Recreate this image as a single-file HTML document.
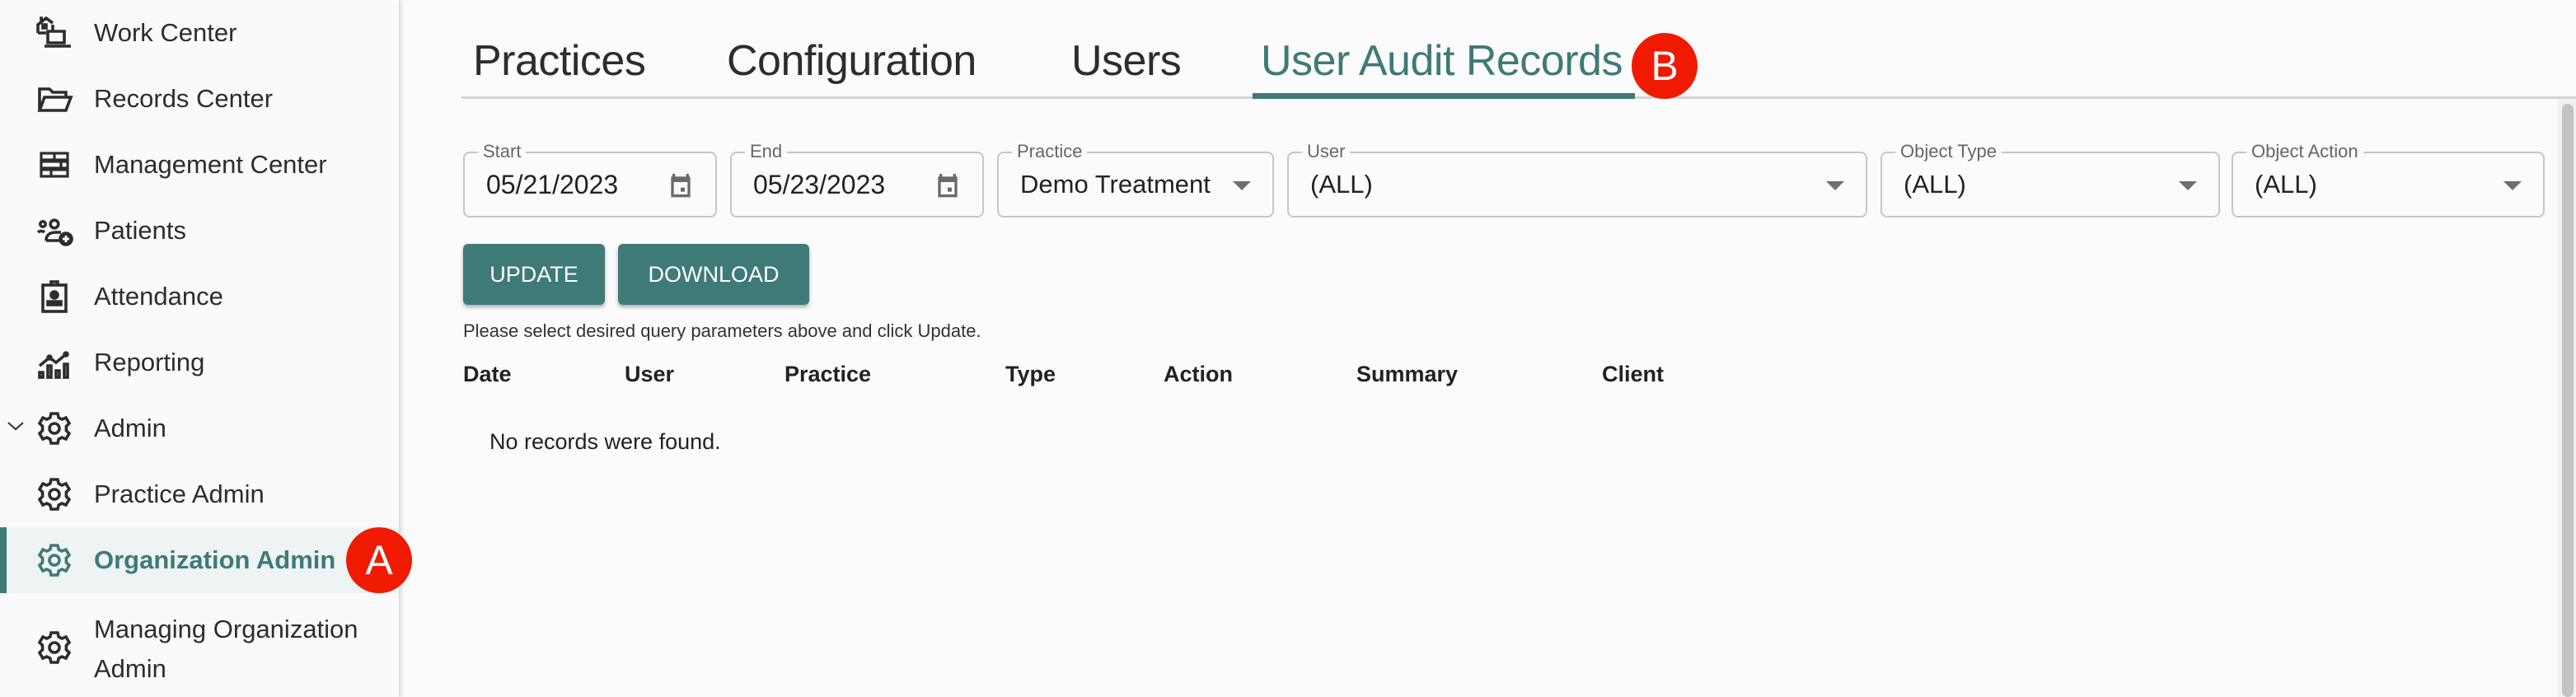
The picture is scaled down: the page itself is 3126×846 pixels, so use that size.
<!DOCTYPE html>
<html><head><meta charset="utf-8"><style>
*{box-sizing:border-box;margin:0;padding:0}
body{width:3126px;height:846px;overflow:hidden;background:#fbfbfb;font-family:"Liberation Sans",sans-serif;color:#2b2b2b;position:relative}
.abs{position:absolute}
#side{left:0;top:0;width:484px;height:846px;background:#fafafa;box-shadow:2px 0 6px rgba(0,0,0,.18)}
.it{position:absolute;left:114px;font-size:31px;line-height:40px;color:#2d2d2d;white-space:nowrap}
.ic{position:absolute;left:42px;width:48px;height:48px}
.tab{position:absolute;top:44px;font-size:52px;line-height:60px;color:#2d2d2d;letter-spacing:-0.5px}
.fld{position:absolute;top:184px;height:80px;border:2px solid #c6c6c6;border-radius:8px}
.lbl{position:absolute;top:-16px;left:16px;background:#fbfbfb;padding:0 6px;font-size:22px;line-height:28px;color:#666}
.val{position:absolute;left:26px;top:18px;font-size:31px;line-height:40px;color:#222}
.arr{position:absolute;right:26px;top:34px;width:0;height:0;border-left:11px solid transparent;border-right:11px solid transparent;border-top:11px solid #6f6f6f}
.cal{position:absolute;right:22px;top:20px}
.btn{position:absolute;top:296px;height:74px;background:#3e7a78;border-radius:6px;color:#fff;font-size:27px;line-height:74px;text-align:center;box-shadow:0 3px 5px rgba(0,0,0,.3)}
.th{position:absolute;top:436px;font-size:27px;font-weight:bold;line-height:36px;color:#222}
.badge{position:absolute;width:80px;height:80px;border-radius:50%;background:#f01a00;color:#fff;font-size:50px;line-height:80px;text-align:center}
</style></head><body>
<div id="side" class="abs">
<svg class="ic" style="top:16px" viewBox="0 0 24 24" fill="none" stroke="#2d2d2d" stroke-width="1.8"><path d="M2 12V7l5-4 4 3M2 12h5M4 6V3h1"/><rect x="5" y="7" width="2" height="2" fill="#2d2d2d"/><path d="M11 7v4M8 11h10v7H8zM6 20h16"/></svg>
<div class="it" style="top:20px">Work Center</div>
<svg class="ic" style="top:96px" viewBox="0 0 24 24" fill="none" stroke="#2d2d2d" stroke-width="1.8"><path d="M3 19V6h6l2 2h8v3M3 19l3-8h16l-3 8z"/></svg>
<div class="it" style="top:100px">Records Center</div>
<svg class="ic" style="top:176px" viewBox="0 0 24 24" fill="none" stroke="#2d2d2d" stroke-width="1.6"><rect x="4" y="5" width="16" height="4"/><rect x="4" y="10" width="16" height="4"/><rect x="4" y="15" width="16" height="4"/><path d="M12 5v4M16 10v4M10 15v4"/></svg>
<div class="it" style="top:180px">Management Center</div>
<svg class="ic" style="top:256px" viewBox="0 0 24 24" fill="none" stroke="#2d2d2d" stroke-width="1.8"><circle cx="5" cy="8" r="1.6"/><circle cx="12" cy="8" r="2.4"/><path d="M2 13c1-1 3-1 4 0M7 18c0-4 3-5 6-5h3M7 18h8"/><circle cx="19" cy="17" r="3.5" fill="#2d2d2d"/><path d="M19 15v4M17 17h4" stroke="#fff" stroke-width="1.4"/></svg>
<div class="it" style="top:260px">Patients</div>
<svg class="ic" style="top:336px" viewBox="0 0 24 24" fill="none" stroke="#2d2d2d" stroke-width="1.8"><rect x="5" y="5" width="14" height="16"/><path d="M10 5V3h4v2"/><circle cx="12" cy="11" r="2" fill="#2d2d2d"/><path d="M8 17h8v-2H8z" fill="#2d2d2d"/></svg>
<div class="it" style="top:340px">Attendance</div>
<svg class="ic" style="top:416px" viewBox="0 0 24 24" fill="none" stroke="#2d2d2d" stroke-width="1.8"><path d="M3 14l6-5 4 3 6-5"/><circle cx="9" cy="9" r="1" fill="#2d2d2d"/><circle cx="19" cy="7" r="1" fill="#2d2d2d"/><rect x="3" y="18" width="2" height="3"/><rect x="8" y="14" width="2" height="7"/><rect x="13" y="17" width="2" height="4"/><rect x="18" y="13" width="2" height="8"/></svg>
<div class="it" style="top:420px">Reporting</div>
<svg class="abs" style="left:8px;top:510px" width="22" height="14" viewBox="0 0 22 14"><path d="M2 3l9 8 9-8" fill="none" stroke="#2d2d2d" stroke-width="2"/></svg>
<svg class="ic" style="top:496px" viewBox="0 0 24 24"><g fill="none" stroke="#2d2d2d" stroke-width="1.8"><path d="M10 3h4l.6 2.5 2 1 2.4-1 2 3.4-1.8 1.8v2.6l1.8 1.8-2 3.4-2.4-1-2 1L14 21h-4l-.6-2.5-2-1-2.4 1-2-3.4 1.8-1.8v-2.6L3 8.9l2-3.4 2.4 1 2-1z"/><circle cx="12" cy="12" r="3"/></g></svg>
<div class="it" style="top:500px">Admin</div>
<svg class="ic" style="top:576px" viewBox="0 0 24 24"><g fill="none" stroke="#2d2d2d" stroke-width="1.8"><path d="M10 3h4l.6 2.5 2 1 2.4-1 2 3.4-1.8 1.8v2.6l1.8 1.8-2 3.4-2.4-1-2 1L14 21h-4l-.6-2.5-2-1-2.4 1-2-3.4 1.8-1.8v-2.6L3 8.9l2-3.4 2.4 1 2-1z"/><circle cx="12" cy="12" r="3"/></g></svg>
<div class="it" style="top:580px">Practice Admin</div>
<div class="abs" style="left:0;top:640px;width:484px;height:80px;background:#eef3f3"></div>
<div class="abs" style="left:0;top:640px;width:8px;height:80px;background:#3e7a78"></div>
<svg class="ic" style="top:656px" viewBox="0 0 24 24"><g fill="none" stroke="#3e7a78" stroke-width="1.8"><path d="M10 3h4l.6 2.5 2 1 2.4-1 2 3.4-1.8 1.8v2.6l1.8 1.8-2 3.4-2.4-1-2 1L14 21h-4l-.6-2.5-2-1-2.4 1-2-3.4 1.8-1.8v-2.6L3 8.9l2-3.4 2.4 1 2-1z"/><circle cx="12" cy="12" r="3"/></g></svg>
<div class="it" style="top:660px;color:#3e7a78;font-weight:bold">Organization Admin</div>
<svg class="ic" style="top:762px" viewBox="0 0 24 24"><g fill="none" stroke="#2d2d2d" stroke-width="1.8"><path d="M10 3h4l.6 2.5 2 1 2.4-1 2 3.4-1.8 1.8v2.6l1.8 1.8-2 3.4-2.4-1-2 1L14 21h-4l-.6-2.5-2-1-2.4 1-2-3.4 1.8-1.8v-2.6L3 8.9l2-3.4 2.4 1 2-1z"/><circle cx="12" cy="12" r="3"/></g></svg>
<div class="it" style="top:740px;line-height:48px">Managing Organization<br>Admin</div>
</div>
<div class="badge" style="left:420px;top:640px">A</div>

<div class="abs" style="left:560px;top:117px;width:2566px;height:3px;background:#d0d4d4"></div>
<div class="tab" style="left:574px">Practices</div>
<div class="tab" style="left:882px">Configuration</div>
<div class="tab" style="left:1300px">Users</div>
<div class="tab" style="left:1530px;color:#3e7a78">User Audit Records</div>
<div class="abs" style="left:1520px;top:113px;width:464px;height:7px;background:#3e7a78"></div>
<div class="badge" style="left:1980px;top:40px">B</div>

<div class="fld" style="left:562px;width:308px"><span class="lbl">Start</span><span class="val" style="font-size:32px">05/21/2023</span>
<svg class="cal" width="40" height="40" viewBox="0 0 24 24"><path d="M5 5h14v15H5z" fill="#6a6a6a"/><path d="M7 3v3M17 3v3" stroke="#6a6a6a" stroke-width="2"/><rect x="7" y="9" width="10" height="9" fill="#fbfbfb"/><rect x="12" y="13" width="3" height="3" fill="#6a6a6a"/></svg></div>
<div class="fld" style="left:886px;width:308px"><span class="lbl">End</span><span class="val" style="font-size:32px">05/23/2023</span>
<svg class="cal" width="40" height="40" viewBox="0 0 24 24"><path d="M5 5h14v15H5z" fill="#6a6a6a"/><path d="M7 3v3M17 3v3" stroke="#6a6a6a" stroke-width="2"/><rect x="7" y="9" width="10" height="9" fill="#fbfbfb"/><rect x="12" y="13" width="3" height="3" fill="#6a6a6a"/></svg></div>
<div class="fld" style="left:1210px;width:336px"><span class="lbl">Practice</span><span class="val">Demo Treatment</span><span class="arr"></span></div>
<div class="fld" style="left:1562px;width:704px"><span class="lbl">User</span><span class="val">(ALL)</span><span class="arr"></span></div>
<div class="fld" style="left:2282px;width:412px"><span class="lbl">Object Type</span><span class="val">(ALL)</span><span class="arr"></span></div>
<div class="fld" style="left:2708px;width:380px"><span class="lbl">Object Action</span><span class="val">(ALL)</span><span class="arr"></span></div>

<div class="btn" style="left:562px;width:172px">UPDATE</div>
<div class="btn" style="left:750px;width:232px">DOWNLOAD</div>
<div class="abs" style="left:562px;top:389px;font-size:22px;line-height:26px;color:#333">Please select desired query parameters above and click Update.</div>
<div class="th" style="left:562px">Date</div>
<div class="th" style="left:758px">User</div>
<div class="th" style="left:952px">Practice</div>
<div class="th" style="left:1220px">Type</div>
<div class="th" style="left:1412px">Action</div>
<div class="th" style="left:1646px">Summary</div>
<div class="th" style="left:1944px">Client</div>
<div class="abs" style="left:594px;top:518px;font-size:27px;line-height:36px;color:#222">No records were found.</div>

<div class="abs" style="left:3104px;top:120px;width:22px;height:726px;background:#f1f1f1"></div>
<div class="abs" style="left:3109px;top:126px;width:14px;height:720px;border-radius:7px;background:#c3c3c3"></div>
</body></html>
